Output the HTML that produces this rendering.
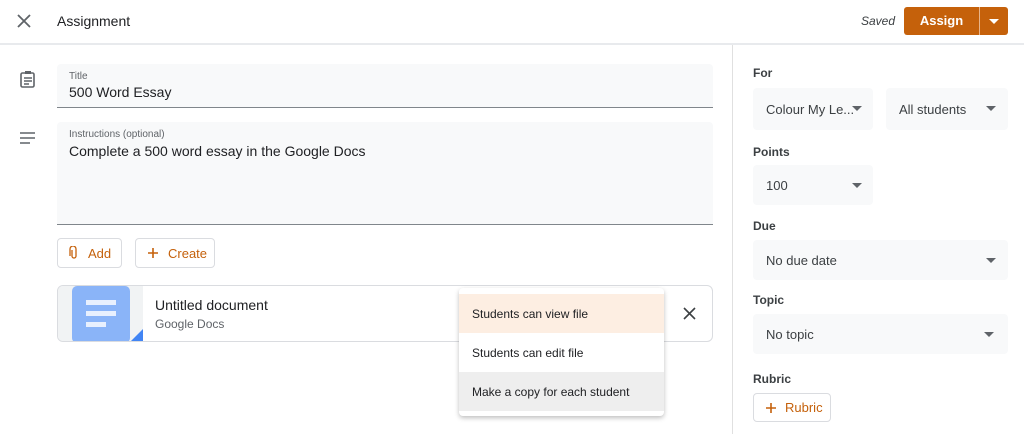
<!DOCTYPE html><html><head><style>
*{box-sizing:border-box;margin:0;padding:0}
body{width:1024px;height:434px;overflow:hidden;background:#fff;font-family:"Liberation Sans",sans-serif;color:#202124;position:relative}
.a{position:absolute}
.f{background:#f8f9fa;border-radius:4px 4px 0 0}
.lbl{font-size:10px;color:#5f6368}
.dd{background:#f8f9fa;border-radius:4px;font-size:13px;color:#3c4043;padding-left:13px;display:flex;align-items:center}
.car{position:absolute;width:0;height:0;border-left:5px solid transparent;border-right:5px solid transparent;border-top:5px solid #5f6368}
.h{font-size:12px;color:#3c4043;font-weight:bold}
.btn{border:1px solid #dadce0;border-radius:4px;color:#c5610b;font-size:13px;display:flex;align-items:center}
.mi{position:absolute;left:0;width:205px;height:39px;font-size:12px;padding-left:13px;display:flex;align-items:center}
</style></head><body>
<div class="a" style="left:0;top:43px;width:1024px;height:2px;background:#e8eaed"></div>
<div class="a" style="left:732px;top:45px;width:1px;height:389px;background:#e0e0e0"></div>
<svg class="a" style="left:16px;top:13px" width="16" height="16"><path d="M2 2L14 14M14 2L2 14" stroke="#5f6368" stroke-width="1.8"/></svg>
<div class="a" style="left:57px;top:13px;font-size:14px">Assignment</div>
<div class="a" style="left:861px;top:14px;font-size:12px;font-style:italic;color:#3c4043">Saved</div>
<div class="a" style="left:904px;top:7px;width:104px;height:28px;background:#c5610b;border-radius:3px"></div>
<div class="a" style="left:979px;top:7px;width:1px;height:28px;background:#e8b48a"></div>
<div class="a" style="left:904px;top:7px;width:75px;height:28px;color:#fff;font-size:13px;font-weight:bold;text-align:center;line-height:28px">Assign</div>
<div class="car" style="left:989px;top:19px;border-top-color:#fff"></div>
<svg class="a" style="left:19px;top:70px" width="18" height="19"><rect x="2" y="3" width="13" height="14" rx="1.5" fill="none" stroke="#5f6368" stroke-width="1.6"/><rect x="6" y="1" width="6" height="3" fill="#5f6368"/><path d="M5 8h8M5 11h8M5 14h5" stroke="#5f6368" stroke-width="1.4"/></svg>
<svg class="a" style="left:19px;top:131px" width="18" height="14"><path d="M1 2h15M1 7h15M1 12h10" stroke="#5f6368" stroke-width="1.6"/></svg>
<div class="a f" style="left:57px;top:64px;width:656px;height:44px;border-bottom:1px solid #80868b"></div>
<div class="a lbl" style="left:69px;top:71px">Title</div>
<div class="a" style="left:69px;top:84px;font-size:14px">500 Word Essay</div>
<div class="a f" style="left:57px;top:122px;width:656px;height:103px;border-bottom:1px solid #80868b"></div>
<div class="a lbl" style="left:69px;top:129px">Instructions (optional)</div>
<div class="a" style="left:69px;top:143px;font-size:14px">Complete a 500 word essay in the Google Docs</div>
<div class="a btn" style="left:57px;top:238px;width:65px;height:30px;padding-left:11px"><svg width="10" height="14"><path d="M3 4v6a2 2 0 0 0 4 0V3a3 3 0 0 0-6 0v7" fill="none" stroke="#c5610b" stroke-width="1.3"/></svg><span style="margin-left:9px">Add</span></div>
<div class="a btn" style="left:135px;top:238px;width:80px;height:30px;padding-left:11px"><svg width="12" height="12"><path d="M6 1v10M1 6h10" stroke="#c5610b" stroke-width="1.6"/></svg><span style="margin-left:9px">Create</span></div>
<div class="a" style="left:57px;top:285px;width:656px;height:57px;border:1px solid #dadce0;border-radius:6px;overflow:hidden">
<div class="a" style="left:0;top:0;width:85px;height:57px;background:#f1f3f4"></div>
<div class="a" style="left:14px;top:0;width:58px;height:57px;background:#8ab4f8;border-radius:5px"></div>
<div class="a" style="left:28px;top:14px;width:30px;height:5px;background:#e8f0fe"></div>
<div class="a" style="left:28px;top:25px;width:30px;height:5px;background:#e8f0fe"></div>
<div class="a" style="left:28px;top:36px;width:20px;height:5px;background:#e8f0fe"></div>
<div class="a" style="left:72px;top:43px;width:0;height:0;border-left:13px solid transparent;border-bottom:13px solid #4285f4"></div>
</div>
<div class="a" style="left:155px;top:297px;font-size:14px">Untitled document</div>
<div class="a" style="left:155px;top:317px;font-size:12px;color:#5f6368">Google Docs</div>
<svg class="a" style="left:683px;top:307px" width="13" height="13"><path d="M1 1L12 12M12 1L1 12" stroke="#3c4043" stroke-width="1.6"/></svg>
<div class="a" style="left:459px;top:288px;width:205px;height:128px;background:#fff;border-radius:4px;box-shadow:0 2px 5px rgba(0,0,0,.25)">
<div class="mi" style="top:6px;background:#fdeee2">Students can view file</div>
<div class="mi" style="top:45px">Students can edit file</div>
<div class="mi" style="top:84px;background:#eeeeee">Make a copy for each student</div>
</div>
<div class="a h" style="left:753px;top:66px">For</div>
<div class="a dd" style="left:753px;top:88px;width:120px;height:42px">Colour My Le...</div><div class="car" style="left:852px;top:106px"></div>
<div class="a dd" style="left:886px;top:88px;width:122px;height:42px">All students</div><div class="car" style="left:986px;top:106px"></div>
<div class="a h" style="left:753px;top:145px">Points</div>
<div class="a dd" style="left:753px;top:165px;width:120px;height:40px">100</div><div class="car" style="left:852px;top:183px"></div>
<div class="a h" style="left:753px;top:219px">Due</div>
<div class="a dd" style="left:753px;top:240px;width:255px;height:40px">No due date</div><div class="car" style="left:986px;top:258px"></div>
<div class="a h" style="left:753px;top:293px">Topic</div>
<div class="a dd" style="left:753px;top:314px;width:255px;height:40px">No topic</div><div class="car" style="left:984px;top:332px"></div>
<div class="a h" style="left:753px;top:372px">Rubric</div>
<div class="a btn" style="left:753px;top:393px;width:78px;height:29px;padding-left:11px"><svg width="12" height="12"><path d="M6 1v10M1 6h10" stroke="#c5610b" stroke-width="1.6"/></svg><span style="margin-left:8px">Rubric</span></div>
</body></html>
